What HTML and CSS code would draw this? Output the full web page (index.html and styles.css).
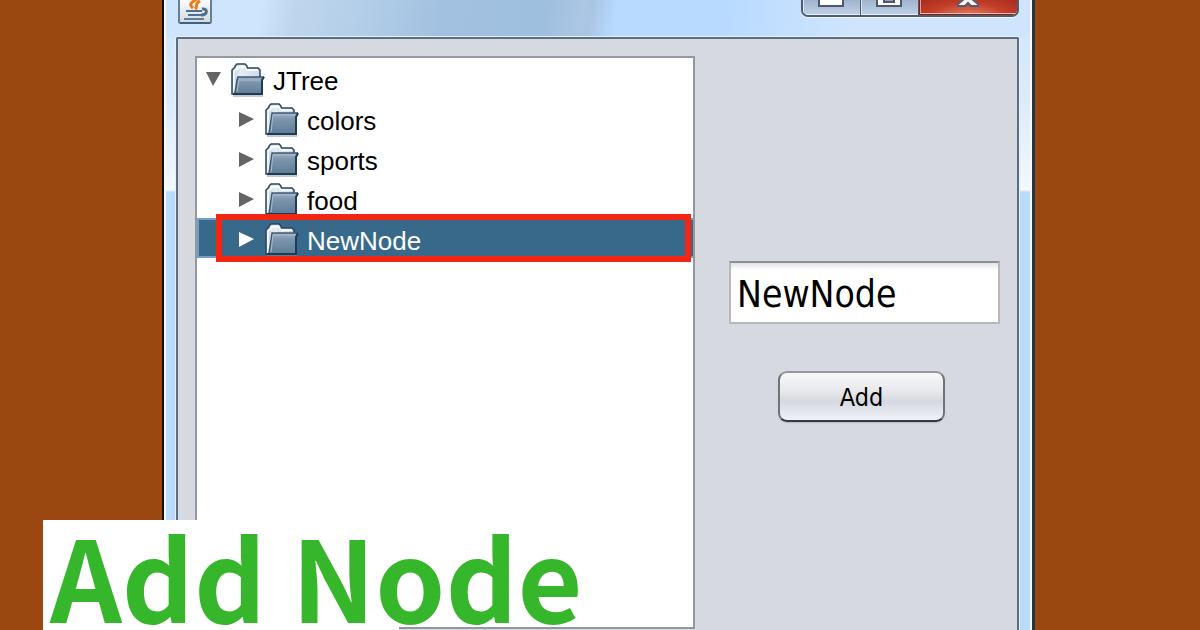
FILE: index.html
```html
<!DOCTYPE html>
<html lang="en">
<head>
    <meta charset="UTF-8">
    <meta name="viewport" content="width=device-width, initial-scale=1.0">
    <title>JTree - Add Node</title>
    <link rel="stylesheet" href="styles.css">
</head>
<body>
    <!-- shared icons -->
    <svg class="sprite" aria-hidden="true">
        <defs>
            <linearGradient id="folder-front" x1="0" y1="0" x2="0" y2="1">
                <stop offset="0" stop-color="#9fb2c6"/>
                <stop offset="0.3" stop-color="#7d95ad"/>
                <stop offset="1" stop-color="#5f7c98"/>
            </linearGradient>
            <linearGradient id="folder-back" x1="0" y1="0" x2="1" y2="0">
                <stop offset="0" stop-color="#bfcddc"/>
                <stop offset="0.3" stop-color="#e6edf4"/>
                <stop offset="1" stop-color="#cfdbe6"/>
            </linearGradient>
        </defs>
        <symbol id="folder-open" viewBox="0 0 34 36">
            <path d="M2 33H32" stroke="#8d949b" stroke-width="2" opacity=".5"/>
            <path d="M1 31V7L4 4V3L6 1H14L16 3V5H27L29 7V31Z" fill="url(#folder-back)" stroke="#27465f" stroke-width="1.5"/>
            <path d="M3 30V8L6 6V4H14L16 7H27" fill="none" stroke="#fff" stroke-width="1.5"/>
            <path d="M7 14H34L31 18V31H3L6 18Z" fill="url(#folder-front)"/>
            <path d="M4 30L6 17L7 14H33" fill="none" stroke="#3c5a76" stroke-width="1.5"/>
            <path d="M6 29L8 17H31" fill="none" stroke="#a9bccd" stroke-width="1"/>
            <path d="M2 31H31V17L33 14" fill="none" stroke="#1d3b55" stroke-width="2"/>
        </symbol>
        <symbol id="folder" viewBox="0 0 34 36">
            <path d="M2 33H32" stroke="#8d949b" stroke-width="2" opacity=".5"/>
            <path d="M1 31V7L4 4V3L6 1H14L16 3V5H27L29 7V31Z" fill="url(#folder-back)" stroke="#27465f" stroke-width="1.5"/>
            <path d="M3 30V8L6 6V4H14L16 7H27" fill="none" stroke="#fff" stroke-width="1.5"/>
            <path d="M7 10H34L31 14V31H4L6 17Z" fill="url(#folder-front)"/>
            <path d="M4 30L6 17L7 10H33" fill="none" stroke="#3c5a76" stroke-width="1.5"/>
            <path d="M6 29L8 12H31" fill="none" stroke="#a9bccd" stroke-width="1"/>
            <path d="M2 31H31V14L33 10" fill="none" stroke="#1d3b55" stroke-width="2"/>
        </symbol>
    </svg>

    <main class="window">
        <header class="titlebar">
            <svg class="java-icon" viewBox="0 0 34 25" aria-hidden="true">
                <defs>
                    <linearGradient id="java-bg" x1="0" y1="0" x2="0" y2="1">
                        <stop offset="0" stop-color="#fff"/>
                        <stop offset="1" stop-color="#d3d9e0"/>
                    </linearGradient>
                </defs>
                <path d="M1 -2H33V22L32 23H2L1 22Z" fill="url(#java-bg)" stroke="#647f97" stroke-width="2"/>
                <path d="M2 23H32" stroke="#456079" stroke-width="2"/>
                <path d="M15 8C10 4 14 2 19 -1M17 9C21 6 15 5 22 1" fill="none" stroke="#ee7a16" stroke-width="3"/>
                <path d="M8 11H24M10 15H23" fill="none" stroke="#4b7090" stroke-width="2"/>
                <path d="M24 9C30 8 30 15 23 15" fill="none" stroke="#4b7090" stroke-width="3"/>
                <path d="M6 19H26" stroke="#5e7f9d" stroke-width="2"/>
            </svg>
            <div class="window-buttons">
                <button class="window-button" type="button" aria-label="Minimize">
                    <svg viewBox="0 0 26 8"><path d="M1 -2H25V6H1Z" fill="#fff" stroke="#50596b" stroke-width="2"/></svg>
                </button>
                <button class="window-button" type="button" aria-label="Maximize">
                    <svg viewBox="0 0 26 8"><path d="M1 -4H25V6H1Z" fill="#fff" stroke="#50596b" stroke-width="2"/><path d="M8 -2H18V2H8Z" fill="#8fa3c0" stroke="#50596b" stroke-width="2"/></svg>
                </button>
                <button class="window-button window-button-close" type="button" aria-label="Close">
                    <svg viewBox="0 0 26 8"><path d="M6 -6L9 -1L3 4V6H10L13 3L16 6H23V4L17 -1L20 -6Z" fill="#f4f4f6" stroke="#565a6b" stroke-width="2"/></svg>
                </button>
            </div>
        </header>

        <div class="content">
            <ul class="tree" role="tree">
                <li class="node" role="treeitem" aria-expanded="true">
                    <button class="toggle" type="button" aria-label="Collapse"><svg viewBox="0 0 16 16"><path d="M1 1H16L8 15Z"/></svg></button>
                    <svg class="folder" aria-hidden="true"><use href="#folder-open"/></svg>
                    <span>JTree</span>
                </li>
                <li class="node child" role="treeitem">
                    <button class="toggle" type="button" aria-label="Expand"><svg viewBox="0 0 16 16"><path d="M0 1L15 8L0 16Z"/></svg></button>
                    <svg class="folder" aria-hidden="true"><use href="#folder"/></svg>
                    <span>colors</span>
                </li>
                <li class="node child" role="treeitem">
                    <button class="toggle" type="button" aria-label="Expand"><svg viewBox="0 0 16 16"><path d="M0 1L15 8L0 16Z"/></svg></button>
                    <svg class="folder" aria-hidden="true"><use href="#folder"/></svg>
                    <span>sports</span>
                </li>
                <li class="node child" role="treeitem">
                    <button class="toggle" type="button" aria-label="Expand"><svg viewBox="0 0 16 16"><path d="M0 1L15 8L0 16Z"/></svg></button>
                    <svg class="folder" aria-hidden="true"><use href="#folder"/></svg>
                    <span>food</span>
                </li>
                <li class="node child selected" role="treeitem" aria-selected="true">
                    <button class="toggle" type="button" aria-label="Expand"><svg viewBox="0 0 16 16"><path d="M0 1L15 8L0 16Z"/></svg></button>
                    <svg class="folder" aria-hidden="true"><use href="#folder"/></svg>
                    <span>NewNode</span>
                </li>
            </ul>

            <form class="controls">
                <input class="node-name" type="text" aria-label="Node name" value="NewNode">
                <button class="add-button" type="button">Add</button>
            </form>
        </div>
    </main>

    <h1 class="caption">Add Node</h1>
</body>
</html>
```
FILE: styles.css
```css
* {
    box-sizing: border-box;
}

body {
    position: relative;
    display: flex;
    height: 100vh;
    margin: 0;
    padding: 0 165px 0 162px;
    overflow: hidden;
    background-color: #9a480f;
    font-family: "Liberation Sans", Arial, sans-serif;
}

.sprite {
    position: absolute;
    width: 0;
    height: 0;
}

/* window frame */
.window {
    display: flex;
    flex: 1;
    flex-direction: column;
    padding: 0 13px 0 12px;
    border: solid #0b0f12;
    border-width: 0 3px 0 2px;
    border-right-color: #26343d;
    background: linear-gradient(#cfe5fd, #dcebfb 100px, #f3f8fd 190px, #badbff 192px);
    box-shadow: inset 2px 0 #f4faff, inset -2px 0 #f4faff;
}

.titlebar {
    display: flex;
    justify-content: space-between;
    align-items: flex-start;
    height: 37px;
    margin: 0 -11px 0 -10px;
    padding: 0 11px 0 12px;
    background: linear-gradient(100deg, #cfe5fd 0, #cfe5fd 11%, #bfd5ed 15%, #b4cfe9 22%, #a2c1e0 32%, #9fbfdf 44%, #abc7e4 48%, #a9c5e3 49%, #b8daff 52%, #b8daff 64%, #cfe5fd 80%, #cfe5fd);
}

.java-icon {
    width: 34px;
    height: 25px;
}

.window-buttons {
    display: flex;
    width: 218px;
    height: 17px;
    overflow: hidden;
    border: 2px solid #4d5c6e;
    border-top: 0;
    border-radius: 0 0 7px 7px;
    box-shadow: 0 1px #eef7ff;
}

.window-button {
    display: flex;
    flex: 58;
    justify-content: center;
    padding: 0;
    border: 0;
    border-right: 1px solid #4d5c6e;
    background: linear-gradient(#a1b4cd, #c0d1e6);
    box-shadow: inset 1px 0 #dce7f4, inset 0 -1px #e7f0fa;
}

.window-button svg {
    width: 26px;
    height: 8px;
}

.window-button-close {
    flex: 99;
    border: 0;
    border-left: 1px solid #8d1713;
    border-bottom: 1px solid #7c2520;
    background: radial-gradient(ellipse at 50% 120%, #e08a6c, #c5402b 55%, #a92a1e);
    box-shadow: inset 1px 0 #e3a398, inset 0 -1px #eab8a8;
}

.content {
    display: flex;
    flex: 1;
    gap: 34px;
    padding: 17px 17px 1px 17px;
    border: 2px solid #5c6f80;
    border-bottom: 0;
    border-radius: 2px 2px 0 0;
    background-color: #d6d9e0;
    box-shadow: 0 0 0 1px #e3f1ff;
}

/* tree */
.tree {
    flex: 1;
    margin: 0;
    padding: 0;
    border: 2px solid #9297a1;
    background-color: #fff;
    list-style: none;
    font-size: 26px;
}

.node {
    position: relative;
    display: flex;
    align-items: center;
    height: 40px;
    padding: 2px 0 0 8px;
}

.child {
    padding-left: 42px;
}

.toggle {
    width: 16px;
    height: 16px;
    margin: 0 10px 0 0;
    padding: 0;
    border: 0;
    background: none;
    fill: #646464;
}

.toggle svg {
    display: block;
}

.folder {
    width: 34px;
    height: 36px;
    margin: 4px 8px 0 0;
}

.node span {
    padding-top: 4px;
}

.selected {
    border: solid #6f9fc8;
    border-width: 2px 0 2px 2px;
    padding-left: 40px;
    background-color: #39698a;
    color: #fff;
}

.selected .toggle {
    fill: #fff;
}

/* red marker round the new node */
.selected::after {
    content: "";
    position: absolute;
    inset: -6px 2px -6px 17px;
    border: 6px solid #f32613;
}

/* right side */
.controls {
    display: flex;
    flex-direction: column;
    align-items: flex-start;
    gap: 47px;
    width: 271px;
    padding-top: 205px;
}

.node-name {
    width: 100%;
    height: 63px;
    padding: 3px 6px 0;
    border: 2px solid #b6b8bb;
    border-top-color: #8d8f92;
    background: linear-gradient(#e2e2e2, #fff 7px);
    font-family: "DejaVu Sans Condensed", "DejaVu Sans", sans-serif;
    font-size: 37px;
}

.add-button {
    width: 167px;
    height: 51px;
    margin-left: 49px;
    padding: 2px 0 0;
    border: 2px solid #6f7479;
    border-top-color: #94989d;
    border-bottom-color: #34383f;
    border-radius: 9px;
    background: linear-gradient(#f8f8fa, #e6e8eb 40%, #d5d8de 60%, #f0f2fa);
    box-shadow: 0 1px 1px #b4b8c0;
    font-family: "DejaVu Sans Condensed", "DejaVu Sans", sans-serif;
    font-size: 25px;
}

/* caption laid over the window */
.caption {
    position: absolute;
    bottom: 0;
    left: 43px;
    width: 356px;
    height: 110px;
    margin: 0;
    padding-left: 7px;
    background-color: #fff;
    color: #36b62a;
    font-family: "Noto Sans CJK JP", sans-serif;
    font-size: 112px;
    font-weight: bold;
    line-height: 108px;
    white-space: nowrap;
}
```
